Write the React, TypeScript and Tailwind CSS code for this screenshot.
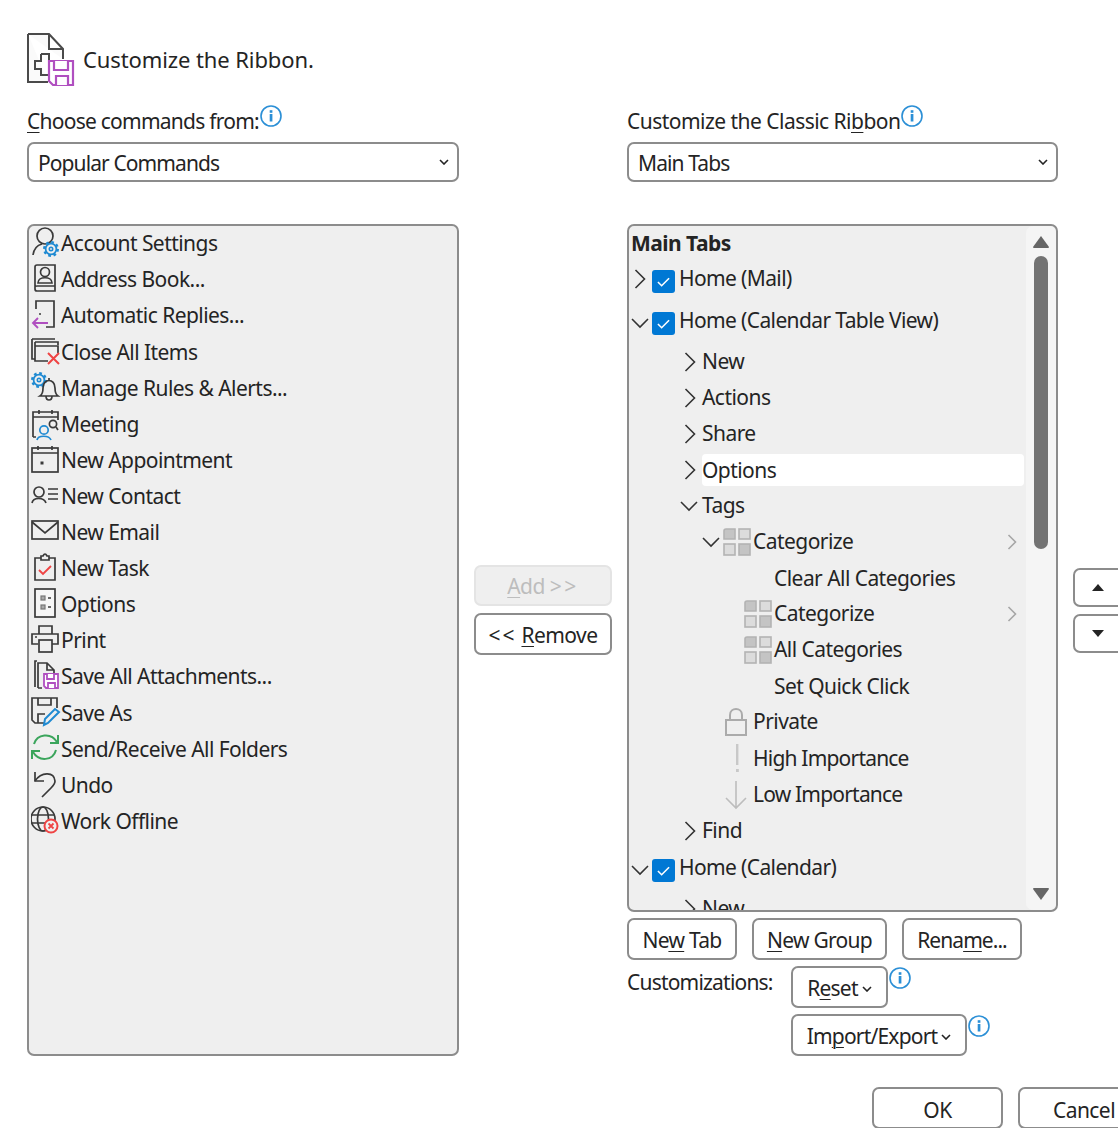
import React from 'react';

const INK = '#3a3a3a';

const Svg = ({ children }: { children: React.ReactNode }) => (
  <svg viewBox="0 0 30 36" className="w-[30px] h-[36px] shrink-0" fill="none" stroke={INK} strokeWidth="1.7">
    {children}
  </svg>
);

const Gear = ({ x, y }: { x: number; y: number }) => (
  <g stroke="#1f8ad2">
    <circle cx={x} cy={y} r="5.4" strokeWidth="1.8" fill="#efefef" />
    <circle cx={x} cy={y} r="6.8" strokeWidth="2.4" strokeDasharray="2.7 2.64" />
    <circle cx={x} cy={y} r="1.7" strokeWidth="1.6" />
  </g>
);

const Floppy = ({ x, y }: { x: number; y: number }) => (
  <g transform={`translate(${x} ${y})`} stroke="#b04fc0" strokeWidth="1.8" fill="#fff">
    <path d="M1 1h14v14H3l-2-2z" />
    <path d="M4 1v5h7V1M5 15v-5h7v5" />
  </g>
);

const icons: Record<string, React.ReactNode> = {
  account: (
    <Svg>
      <circle cx="14" cy="10" r="8" />
      <path d="M2 29c1-7 5-10 9-11" />
      <Gear x={20} y={23} />
    </Svg>
  ),
  book: (
    <Svg>
      <path d="M6 3h18v26H6q-2 0-2-2V5q0-2 2-2zM4 25q0-1 2-1h18" />
      <circle cx="14" cy="10" r="4.5" />
      <path d="M7 21c0-7 14-7 14 0z" />
    </Svg>
  ),
  replies: (
    <Svg>
      <path d="M5 11V3h18v26h-8" />
      <circle cx="9" cy="16" r="1" fill={INK} stroke="none" />
      <path d="M17 25H2M7 20l-5 5 5 5" stroke="#b04fc0" strokeWidth="1.9" />
    </Svg>
  ),
  close: (
    <Svg>
      <path d="M1 5h23M4 8h23v3M4 8v19h13M1 5v20h3" />
      <path d="M4 12h23v7" />
      <path d="M17 19l11 11M28 19L17 30" stroke="#ef4444" strokeWidth="2" />
    </Svg>
  ),
  rules: (
    <Svg>
      <Gear x={8} y={10} />
      <path d="M9 26q3-2 3-8c0-10 12-10 12 0q0 6 3 8zM15 26q0 4 3 4t3-4M18 10V8" />
    </Svg>
  ),
  meeting: (
    <Svg>
      <path d="M2 30V5h25v8M2 10h25M8 3v4M21 3v4M2 30h3" />
      <circle cx="22" cy="17" r="3.6" />
      <path d="M25 20l2 3" />
      <circle cx="13" cy="23" r="4.2" stroke="#1f8ad2" />
      <path d="M6 33c1-5 12-5 14 0" stroke="#1f8ad2" />
    </Svg>
  ),
  appointment: (
    <Svg>
      <rect x="1" y="5" width="26" height="24" />
      <path d="M1 10h26M7 3v4M21 3v4" />
      <rect x="9.5" y="18.5" width="3" height="3" fill={INK} stroke="none" />
    </Svg>
  ),
  contact: (
    <Svg>
      <circle cx="8" cy="13" r="5" />
      <path d="M1 24c1-6 12-6 14 0M17 10h10M17 15h10M17 20h10" />
    </Svg>
  ),
  email: (
    <Svg>
      <rect x="1" y="6" width="26" height="18" />
      <path d="M1 7l13 11L27 7" />
    </Svg>
  ),
  task: (
    <Svg>
      <path d="M10 7H4v22h20V7h-6M10 9V5h2q2-4 4 0h2v4z" />
      <path d="M8 19l4 4 8-8" stroke="#ef4444" strokeWidth="1.9" />
    </Svg>
  ),
  options: (
    <Svg>
      <rect x="4" y="2" width="20" height="28" fill="#f6f6f6" />
      <rect x="10" y="9" width="4" height="4" strokeWidth="1.2" fill="#aaa" stroke="#777" />
      <rect x="10" y="18" width="4" height="4" strokeWidth="1.2" fill="#aaa" stroke="#777" />
      <path d="M17 11h3M17 20h3" strokeWidth="1.3" />
    </Svg>
  ),
  print: (
    <Svg>
      <path d="M8 11V3h13v8M7 21H1V11h26v10h-6" />
      <rect x="8" y="17" width="13" height="12" />
      <circle cx="5" cy="14" r="1" fill={INK} stroke="none" />
    </Svg>
  ),
  saveAll: (
    <Svg>
      <path d="M4 28V2h2M7 29V4h9l7 7v4M7 29h4M16 4v7h7" />
      <Floppy x={12} y={14} />
    </Svg>
  ),
  saveAs: (
    <Svg>
      <path d="M14 28H4l-3-3V3h25v10M7 3v7h13V3" />
      <path d="M7 28v-9h7" />
      <path d="M13 30l1-6 10-10 4 3-11 11z" stroke="#1f8ad2" strokeWidth="2" fill="#efefef" />
    </Svg>
  ),
  send: (
    <Svg>
      <g stroke="#3ba55c" strokeWidth="2">
        <path d="M3 13C6 3 20 1 26 11" />
        <path d="M27 4v8h-8" />
        <path d="M25 19C22 30 8 31 2 21" />
        <path d="M1 28v-8h8" />
      </g>
    </Svg>
  ),
  undo: (
    <Svg>
      <path d="M4 5v9h9" />
      <path d="M4 14C10 5 23 4 24 14c0 3-2 5-4 7l-9 9" />
    </Svg>
  ),
  offline: (
    <Svg>
      <circle cx="12" cy="15" r="12" />
      <ellipse cx="12" cy="15" rx="5.5" ry="12" />
      <path d="M1 11h22M1 19h22" />
      <circle cx="20" cy="22" r="6.5" fill="#efefef" stroke="#ef4444" strokeWidth="2" />
      <path d="M17.5 19.5l5 5M22.5 19.5l-5 5" stroke="#ef4444" strokeWidth="1.8" />
    </Svg>
  ),
};

const commands = [
  ['account', 'Account Settings'],
  ['book', 'Address Book...'],
  ['replies', 'Automatic Replies...'],
  ['close', 'Close All Items'],
  ['rules', 'Manage Rules & Alerts...'],
  ['meeting', 'Meeting'],
  ['appointment', 'New Appointment'],
  ['contact', 'New Contact'],
  ['email', 'New Email'],
  ['task', 'New Task'],
  ['options', 'Options'],
  ['print', 'Print'],
  ['saveAll', 'Save All Attachments...'],
  ['saveAs', 'Save As'],
  ['send', 'Send/Receive All Folders'],
  ['undo', 'Undo'],
  ['offline', 'Work Offline'],
];

const InfoIcon = () => (
  <svg viewBox="0 0 22 22" className="w-[22px] h-[22px] shrink-0">
    <circle cx="11" cy="11" r="10" fill="#fff" stroke="#2b8fd6" strokeWidth="1.6" />
    <rect x="9.7" y="9" width="2.7" height="7.5" fill="#2b8fd6" />
    <rect x="9.7" y="5.2" width="2.7" height="2.6" fill="#2b8fd6" />
  </svg>
);

const Key = ({ children }: { children: React.ReactNode }) => (
  <span className="underline decoration-1 underline-offset-[3px]">{children}</span>
);

const Right = () => (
  <svg viewBox="0 0 12 22" className="w-[12px] h-[22px]" fill="none" stroke="#333" strokeWidth="1.6">
    <path d="M1.5 2l9 9-9 9" />
  </svg>
);

const GreyRight = () => (
  <svg viewBox="0 0 10 16" className="w-[10px] h-[16px] shrink-0" fill="none" stroke="#a6a6a6" strokeWidth="1.6">
    <path d="M1.5 1l7 7-7 7" />
  </svg>
);

const Down = () => (
  <svg viewBox="0 0 18 12" className="w-[18px] h-[12px]" fill="none" stroke="#333" strokeWidth="1.6">
    <path d="M1 2l8 8 8-8" />
  </svg>
);

const SmallDown = () => (
  <svg viewBox="0 0 10 6" className="w-[10px] h-[6px]" fill="none" stroke="#242424" strokeWidth="1.6">
    <path d="M1 1l4 4 4-4" />
  </svg>
);

const Check = () => (
  <span className="w-[23px] h-[23px] mt-[10px] ml-[1px] mr-[4px] rounded-[3px] bg-[#0078d4] flex items-center justify-center shrink-0">
    <svg viewBox="0 0 14 10" className="w-[13px] h-[10px]" fill="none" stroke="#fff" strokeWidth="1.7">
      <path d="M1 5l4 4 8-8" />
    </svg>
  </span>
);

const Squares = () => (
  <svg viewBox="0 0 28 28" className="w-[28px] h-[28px] shrink-0" fill="#d2d2d2" stroke="#b3b3b3" strokeWidth="1.6">
    <path d="M3 1h9v10H1V3q0-2 2-2z" fill="#c4c4c4" />
    <rect x="16" y="1" width="11" height="10" fill="#dcdcdc" />
    <rect x="1" y="16" width="11" height="11" fill="#dcdcdc" />
    <rect x="16" y="16" width="11" height="11" fill="#c4c4c4" />
  </svg>
);

const Lock = () => (
  <svg viewBox="0 0 24 30" className="w-[24px] h-[30px] shrink-0" fill="none" stroke="#ababab" strokeWidth="2">
    <rect x="2" y="13" width="20" height="15" />
    <path d="M6 13V8c0-8 12-8 12 0v5" />
  </svg>
);

const Bang = () => (
  <svg viewBox="0 0 24 30" className="w-[24px] h-[30px] shrink-0" fill="#c8c8c8">
    <rect x="12" y="1" width="2.4" height="21" />
    <rect x="12" y="26" width="2.8" height="3" />
  </svg>
);

const ArrowDown = () => (
  <svg viewBox="0 0 24 30" className="w-[24px] h-[30px] shrink-0" fill="none" stroke="#bdbdbd" strokeWidth="1.6">
    <path d="M12 1v27M2 18l10 10 10-10" />
  </svg>
);

const Home = ({ open, label }: { open?: boolean; label: string }) => (
  <div className="h-[42px] pl-[2px] flex shrink-0">
    <span className={open ? 'w-[20px] pt-[15px]' : 'w-[20px] pt-[8px] pl-[3px]'}>{open ? <Down /> : <Right />}</span>
    <Check />
    <span className="h-[36px] leading-[36px] tracking-[-0.62px]">{label}</span>
  </div>
);

const Group = ({ label, open, selected }: { label: string; open?: boolean; selected?: boolean }) => (
  <div className="h-[36px] pl-[51px] flex items-center shrink-0">
    <span className={open ? 'w-[22px] shrink-0' : 'w-[22px] shrink-0 pl-[4px]'}>{open ? <Down /> : <Right />}</span>
    <span className={selected ? 'w-[322px] h-[32px] leading-[32px] bg-white rounded-[4px]' : ''}>{label}</span>
  </div>
);

const Button = ({ className, children }: { className: string; children: React.ReactNode }) => (
  <button className={`border-2 border-[#8c8c8c] rounded-[7px] bg-white flex items-center justify-center shrink-0 ${className}`}>
    {children}
  </button>
);

const SelectBox = ({ label }: { label: string }) => (
  <div className="h-[40px] mt-[5px] border-2 border-[#8c8c8c] rounded-[7px] bg-white pl-[9px] pr-[8px] flex items-center justify-between">
    <span className="pt-[3px] tracking-[-0.9px]">{label}</span>
    <SmallDown />
  </div>
);

export default function App() {
  return (
    <div className="w-[1118px] h-[1128px] overflow-hidden bg-white text-[#242424] text-[21px] font-['Noto_Sans',sans-serif] tracking-[-0.55px] pl-[27px] pt-[33px]">
      <div className="h-[54px] flex items-center gap-[8px]">
        <svg viewBox="0 0 48 54" className="w-[48px] h-[54px] shrink-0" fill="none" stroke="#4a4a4a" strokeWidth="2">
          <path d="M1 1v48h20M1 1h21l14 15v10M22 1v15h14" fill="#fafafa" />
          <path d="M14 21h8v7M14 21v7H8v8h6v6h7" />
          <g transform="translate(21 27)" stroke="#b04fc0" strokeWidth="2.2" fill="#fff">
            <path d="M1 1h24v24H5l-4-4z" />
            <path d="M6 1v9h14V1M8 25v-9h12v9" />
          </g>
        </svg>
        <span className="text-[22px] tracking-[-0.1px] -mt-[2px]">Customize the Ribbon.</span>
      </div>

      <div className="flex gap-[15px]">
        <div className="w-[432px] shrink-0">
          <div className="h-[50px] pt-[20px] flex items-start">
            <span className="leading-[28px] tracking-[-0.75px]"><Key>C</Key>hoose commands from:</span>
            <span className="-mt-[2px] ml-[1px]"><InfoIcon /></span>
          </div>
          <SelectBox label="Popular Commands" />
          <div className="h-[832px] mt-[42px] border-2 border-[#8c8c8c] rounded-[7px] bg-[#efefef] pl-[2px]">
            {commands.map(([icon, label]) => (
              <div key={label} className="h-[36.1px] flex items-center whitespace-nowrap">
                {icons[icon]}
                <span>{label}</span>
              </div>
            ))}
          </div>
        </div>

        <div className="w-[138px] shrink-0 pt-[478px] flex flex-col gap-[7px]">
          <button className="h-[41px] pt-[3px] rounded-[7px] border-2 border-[#e4e4e4] bg-[#efefef] text-[#bdbdbd]">
            <Key>A</Key>dd <span className="tracking-[2.5px]">&gt;&gt;</span>
          </button>
          <Button className="w-full h-[42px] pt-[4px]"><span><span className="tracking-[2px]">&lt;&lt;</span> <Key>R</Key>emove</span></Button>
        </div>

        <div className="w-[431px] shrink-0">
          <div className="h-[50px] pt-[20px] flex items-start">
            <span className="leading-[28px] tracking-[-0.53px]">Customize the Classic Ri<Key>b</Key>bon</span>
            <span className="-mt-[2px] ml-[1px]"><InfoIcon /></span>
          </div>
          <SelectBox label="Main Tabs" />
          <div className="h-[688px] mt-[42px] border-2 border-[#8c8c8c] rounded-[7px] bg-[#efefef] flex overflow-hidden">
            <div className="flex-1 min-w-0 flex flex-col overflow-hidden whitespace-nowrap">
              <div className="h-[34px] pl-[2px] leading-[34px] font-bold shrink-0">Main Tabs</div>
              <Home label="Home (Mail)" />
              <Home open label="Home (Calendar Table View)" />
              <Group label="New" />
              <Group label="Actions" />
              <Group label="Share" />
              <Group label="Options" selected />
              <Group label="Tags" open />
              <div className="h-[36px] pl-[73px] pr-[9px] flex items-center shrink-0">
                <span className="w-[21px] shrink-0"><Down /></span>
                <span className="w-[30px] shrink-0"><Squares /></span>
                <span className="flex-1">Categorize</span>
                <GreyRight />
              </div>
              <div className="h-[36px] pl-[145px] leading-[36px] shrink-0">Clear All Categories</div>
              <div className="h-[36px] pl-[115px] pr-[9px] flex items-center shrink-0">
                <span className="w-[30px] shrink-0"><Squares /></span>
                <span className="flex-1">Categorize</span>
                <GreyRight />
              </div>
              <div className="h-[36px] pl-[115px] flex items-center shrink-0">
                <span className="w-[30px] shrink-0"><Squares /></span>
                <span>All Categories</span>
              </div>
              <div className="h-[36px] pl-[145px] leading-[36px] shrink-0">Set Quick Click</div>
              <div className="h-[36px] pl-[95px] flex items-center shrink-0">
                <span className="w-[29px] shrink-0"><Lock /></span>
                <span>Private</span>
              </div>
              <div className="h-[36.5px] pl-[95px] flex items-center shrink-0 tracking-[-0.8px]">
                <span className="w-[29px] shrink-0"><Bang /></span>
                <span>High Importance</span>
              </div>
              <div className="h-[36.5px] pl-[95px] flex items-center shrink-0 tracking-[-0.8px]">
                <span className="w-[29px] shrink-0"><ArrowDown /></span>
                <span>Low Importance</span>
              </div>
              <Group label="Find" />
              <Home open label="Home (Calendar)" />
              <Group label="New" />
            </div>
            <div className="w-[30px] shrink-0 bg-[#f5f5f5] rounded-[7px] flex flex-col items-center pt-[10px] pb-[10px]">
              <svg viewBox="0 0 16 12" className="w-[16px] h-[12px] shrink-0" fill="#666">
                <path d="M8 0l8 11q0 1-1 1H1q-1 0-1-1z" />
              </svg>
              <div className="w-[14px] h-[293px] mt-[8px] rounded-[7px] bg-[#737373]" />
              <svg viewBox="0 0 16 12" className="w-[16px] h-[12px] mt-auto shrink-0" fill="#666">
                <path d="M8 12L0 1q0-1 1-1h14q1 0 1 1z" />
              </svg>
            </div>
          </div>

          <div className="flex mt-[6px] gap-[15px] tracking-[-0.7px]">
            <Button className="w-[110px] h-[42px] pt-[3px]"><span>Ne<Key>w</Key> Tab</span></Button>
            <Button className="w-[135px] h-[42px] pt-[3px]"><span><Key>N</Key>ew Group</span></Button>
            <Button className="w-[120px] h-[42px] pt-[3px]"><span className="tracking-[-0.95px]">Rena<Key>m</Key>e...</span></Button>
          </div>

          <div className="flex mt-[6px] tracking-[-0.8px]">
            <span className="w-[164px] leading-[32px]">Customizations:</span>
            <div className="flex flex-col gap-[6px]">
              <div className="flex items-start">
                <Button className="w-[97px] h-[42px] gap-[4px] pt-[3px]"><span>R<Key>e</Key>set</span><SmallDown /></Button>
                <span className="mt-[1px] ml-[1px]"><InfoIcon /></span>
              </div>
              <div className="flex items-start">
                <Button className="w-[176px] h-[42px] gap-[4px] pt-[3px]"><span>Im<Key>p</Key>ort/Export</span><SmallDown /></Button>
                <span className="mt-[1px] ml-[1px]"><InfoIcon /></span>
              </div>
            </div>
          </div>

          <div className="flex mt-[31px] ml-[245px] gap-[15px] w-[400px]">
            <Button className="w-[131px] h-[42px] pt-[5px]">OK</Button>
            <Button className="w-[132px] h-[42px] pt-[5px]">Cancel</Button>
          </div>
        </div>

        <div className="w-[60px] shrink-0 pt-[481px] flex flex-col gap-[7px]">
          <Button className="w-[60px] h-[39px] justify-start">
            <svg viewBox="0 0 12 7" className="w-[12px] h-[7px] ml-[17px]" fill="#242424"><path d="M6 0l6 7H0z" /></svg>
          </Button>
          <Button className="w-[60px] h-[39px] justify-start">
            <svg viewBox="0 0 12 7" className="w-[12px] h-[7px] ml-[17px]" fill="#242424"><path d="M6 7l6-7H0z" /></svg>
          </Button>
        </div>
      </div>
    </div>
  );
}
